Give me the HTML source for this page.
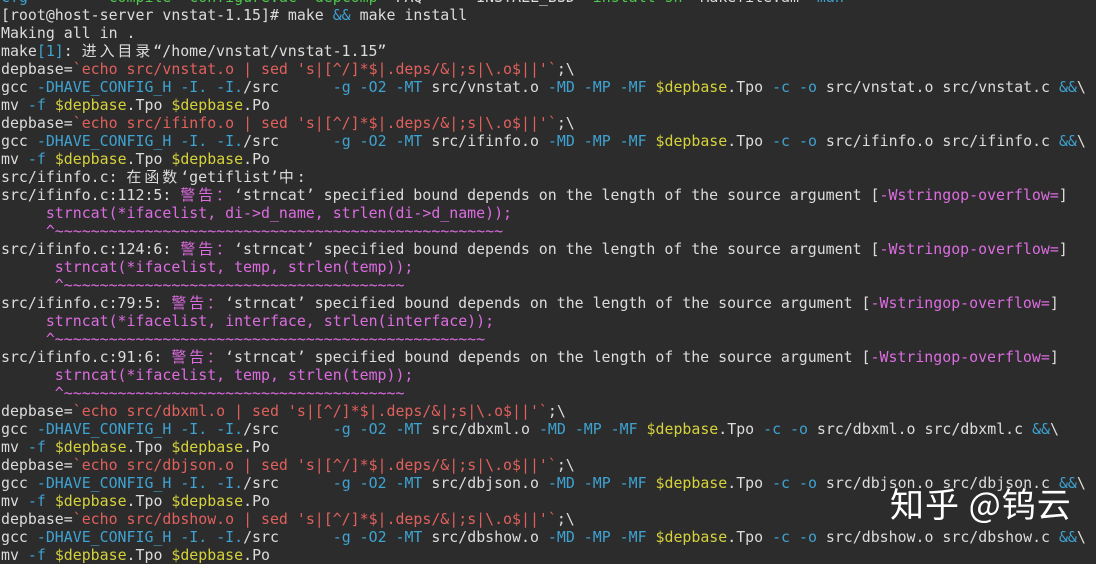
<!DOCTYPE html>
<html><head><meta charset="utf-8"><style>
html,body{margin:0;padding:0;background:#2c2c2c;width:1096px;height:551px;overflow:hidden}
pre{margin:0;position:absolute;left:1px;top:-12px;font-family:"DejaVu Sans Mono","Noto Sans CJK SC",monospace;font-size:14.9px;line-height:18px;color:#dcdcdc;white-space:pre}
.b{color:#3ea3d2}.r{color:#e0605c}.y{color:#d6d23c}.m{color:#dc6ce0}.g{color:#4fc84f}
.c{font-family:"Noto Sans CJK SC",sans-serif;letter-spacing:3px}
.zh{position:absolute;left:890px;top:478px;font-family:"Noto Sans CJK SC",sans-serif;font-size:34px;color:#fff;letter-spacing:1px}
</style></head><body>
<pre><span class="b">cfg</span>         <span class="g">compile</span>  <span class="g">configure.ac</span>  <span class="g">depcomp</span>  FAQ      INSTALL_BSD  <span class="g">install-sh</span>  Makefile.am  <span class="b">man</span>
[root@host-server vnstat-1.15]# make <span class="b">&amp;&amp;</span> make install
Making all in .
make<span class="b">[1]</span>: <span class="c">进入目录</span>“/home/vnstat/vnstat-1.15”
depbase=<span class="r">`echo src/vnstat.o | sed 's|[^/]*$|.deps/&amp;|;s|\.o$||'`</span>;\
gcc <span class="b">-DHAVE_CONFIG_H -I.</span> <span class="b">-I.</span>/src      <span class="b">-g -O2 -MT</span> src/vnstat.o <span class="b">-MD -MP -MF</span> <span class="y">$depbase</span>.Tpo <span class="b">-c -o</span> src/vnstat.o src/vnstat.c <span class="b">&amp;&amp;</span>\
mv <span class="b">-f</span> <span class="y">$depbase</span>.Tpo <span class="y">$depbase</span>.Po
depbase=<span class="r">`echo src/ifinfo.o | sed 's|[^/]*$|.deps/&amp;|;s|\.o$||'`</span>;\
gcc <span class="b">-DHAVE_CONFIG_H -I.</span> <span class="b">-I.</span>/src      <span class="b">-g -O2 -MT</span> src/ifinfo.o <span class="b">-MD -MP -MF</span> <span class="y">$depbase</span>.Tpo <span class="b">-c -o</span> src/ifinfo.o src/ifinfo.c <span class="b">&amp;&amp;</span>\
mv <span class="b">-f</span> <span class="y">$depbase</span>.Tpo <span class="y">$depbase</span>.Po
src/ifinfo.c: <span class="c">在函数</span>‘getiflist’<span class="c">中</span>:
src/ifinfo.c:112:5: <span class="m c">警告：</span>‘strncat’ specified bound depends on the length of the source argument [<span class="m">-Wstringop-overflow=</span>]
     <span class="m">strncat(*ifacelist, di-&gt;d_name, strlen(di-&gt;d_name));</span>
     <span class="m">^~~~~~~~~~~~~~~~~~~~~~~~~~~~~~~~~~~~~~~~~~~~~~~~~~~</span>
src/ifinfo.c:124:6: <span class="m c">警告：</span>‘strncat’ specified bound depends on the length of the source argument [<span class="m">-Wstringop-overflow=</span>]
      <span class="m">strncat(*ifacelist, temp, strlen(temp));</span>
      <span class="m">^~~~~~~~~~~~~~~~~~~~~~~~~~~~~~~~~~~~~~~</span>
src/ifinfo.c:79:5: <span class="m c">警告：</span>‘strncat’ specified bound depends on the length of the source argument [<span class="m">-Wstringop-overflow=</span>]
     <span class="m">strncat(*ifacelist, interface, strlen(interface));</span>
     <span class="m">^~~~~~~~~~~~~~~~~~~~~~~~~~~~~~~~~~~~~~~~~~~~~~~~~</span>
src/ifinfo.c:91:6: <span class="m c">警告：</span>‘strncat’ specified bound depends on the length of the source argument [<span class="m">-Wstringop-overflow=</span>]
      <span class="m">strncat(*ifacelist, temp, strlen(temp));</span>
      <span class="m">^~~~~~~~~~~~~~~~~~~~~~~~~~~~~~~~~~~~~~~</span>
depbase=<span class="r">`echo src/dbxml.o | sed 's|[^/]*$|.deps/&amp;|;s|\.o$||'`</span>;\
gcc <span class="b">-DHAVE_CONFIG_H -I.</span> <span class="b">-I.</span>/src      <span class="b">-g -O2 -MT</span> src/dbxml.o <span class="b">-MD -MP -MF</span> <span class="y">$depbase</span>.Tpo <span class="b">-c -o</span> src/dbxml.o src/dbxml.c <span class="b">&amp;&amp;</span>\
mv <span class="b">-f</span> <span class="y">$depbase</span>.Tpo <span class="y">$depbase</span>.Po
depbase=<span class="r">`echo src/dbjson.o | sed 's|[^/]*$|.deps/&amp;|;s|\.o$||'`</span>;\
gcc <span class="b">-DHAVE_CONFIG_H -I.</span> <span class="b">-I.</span>/src      <span class="b">-g -O2 -MT</span> src/dbjson.o <span class="b">-MD -MP -MF</span> <span class="y">$depbase</span>.Tpo <span class="b">-c -o</span> src/dbjson.o src/dbjson.c <span class="b">&amp;&amp;</span>\
mv <span class="b">-f</span> <span class="y">$depbase</span>.Tpo <span class="y">$depbase</span>.Po
depbase=<span class="r">`echo src/dbshow.o | sed 's|[^/]*$|.deps/&amp;|;s|\.o$||'`</span>;\
gcc <span class="b">-DHAVE_CONFIG_H -I.</span> <span class="b">-I.</span>/src      <span class="b">-g -O2 -MT</span> src/dbshow.o <span class="b">-MD -MP -MF</span> <span class="y">$depbase</span>.Tpo <span class="b">-c -o</span> src/dbshow.o src/dbshow.c <span class="b">&amp;&amp;</span>\
mv <span class="b">-f</span> <span class="y">$depbase</span>.Tpo <span class="y">$depbase</span>.Po</pre>
<div class="zh">知乎 @钨云</div>
</body></html>
